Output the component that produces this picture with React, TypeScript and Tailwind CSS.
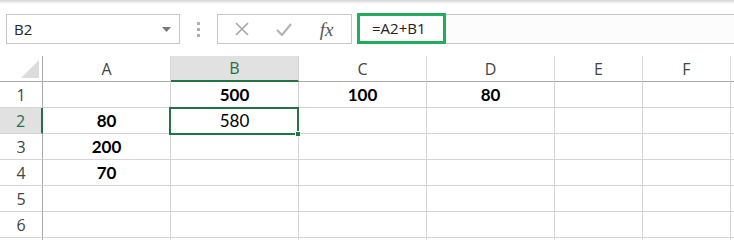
import React from "react";

const cols = ["A", "B", "C", "D", "E", "F", ""];
const data: Record<number, (string | null)[]> = {
  1: [null, "500", "100", "80", null, null, null],
  2: ["80", "580", null, null, null, null, null],
  3: ["200", null, null, null, null, null, null],
  4: ["70", null, null, null, null, null, null],
  5: [null, null, null, null, null, null, null],
  6: [null, null, null, null, null, null, null],
  7: [null, null, null, null, null, null, null],
};

export default function App() {
  return (
    <div className="w-[734px] h-[240px] overflow-hidden bg-white relative" style={{ fontFamily: '"Open Sans", sans-serif' }}>
      <div className="h-[4px] bg-gradient-to-b from-[#d4d4d4] to-white" />
      {/* formula bar */}
      <div className="flex items-stretch h-[31px] mt-[9px]">
        <div className="ml-[6px] w-[174px] border border-[#c6c6c6] bg-white flex items-center justify-between pl-[7px] pr-[8px] mt-[1px] h-[30px]">
          <span className="text-[15px] text-[#222] leading-none">B2</span>
          <svg width="9" height="5" viewBox="0 0 9 5"><path d="M0 0h9L4.5 5z" fill="#777" /></svg>
        </div>
        <div className="w-[37px] flex flex-col items-center justify-center gap-[3px] mt-[1px]">
          <div className="w-[3px] h-[3px] bg-[#b0b0b0]" />
          <div className="w-[3px] h-[3px] bg-[#b0b0b0]" />
          <div className="w-[3px] h-[3px] bg-[#b0b0b0]" />
        </div>
        <div className="w-[135px] h-[30px] mt-[1px] border border-[#c6c6c6] bg-white flex items-center">
          <div className="w-[48px] flex justify-center">
            <svg width="14" height="14" viewBox="0 0 14 14"><path d="M1 1L13 13M13 1L1 13" stroke="#a6a6a6" strokeWidth="1.6" /></svg>
          </div>
          <div className="w-[36px] flex justify-center">
            <svg width="16" height="13" viewBox="0 0 16 13"><path d="M1 7L6 12L15 1" stroke="#b4b4b4" strokeWidth="2.2" fill="none" /></svg>
          </div>
          <div className="flex-1 flex justify-center">
            <span className="italic text-[19px] text-[#555] leading-none" style={{ fontFamily: '"Liberation Serif", serif' }}>fx</span>
          </div>
        </div>
        <div className="ml-[5px] flex-1 flex h-[31px]">
          <div className="w-[89px] border-[3px] border-[#22ad5c] bg-white flex items-center pl-[12px]">
            <span className="text-[15px] text-[#222] leading-none">=A2+B1</span>
          </div>
          <div className="flex-1 border-y border-[#c6c6c6] bg-[#fcfcfc] mt-[1px] h-[30px]" />
        </div>
      </div>
      {/* grid */}
      <div className="mt-[12px] grid grid-cols-[43px_128px_128px_128px_128px_88px_88px_20px] relative">
        {/* header row */}
        <div className="h-[26px] border-r border-b border-[#ababab] relative">
          <svg className="absolute right-[3px] bottom-[3px]" width="18" height="18" viewBox="0 0 18 18"><path d="M18 0V18H0z" fill="#dcdcdc" /></svg>
        </div>
        {cols.map((c, i) => (
          <div
            key={i}
            className={
              c === "B"
                ? "h-[26px] bg-[#e1e1e1] border-r border-[#d4d4d4] border-b-2 border-b-[#217346] flex items-center justify-center text-[16px] text-[#217346]"
                : "h-[26px] border-r border-[#d9d9d9] border-b border-b-[#ababab] flex items-center justify-center text-[16px] text-[#444]"
            }
          >
            {c}
          </div>
        ))}
        {[1, 2, 3, 4, 5, 6, 7].map((r) => (
          <React.Fragment key={r}>
            <div
              className={
                r === 2
                  ? "h-[26px] bg-[#e1e1e1] border-r-2 border-r-[#217346] border-b border-[#d4d4d4] flex items-center justify-center text-[16px] text-[#217346]"
                  : "h-[26px] border-r border-r-[#ababab] border-b border-[#d4d4d4] flex items-center justify-center text-[16px] text-[#444]"
              }
            >
              {r < 7 ? r : ""}
            </div>
            {data[r].map((v, i) => (
              <div
                key={i}
                className={
                  "h-[26px] border-r border-b border-[#d4d4d4] flex items-center justify-center text-[17px] text-black " +
                  (r === 2 && i === 1 ? "font-normal" : "font-bold")
                }
                style={{ fontFamily: 'Lato, "Open Sans", sans-serif' }}
              >
                {v}
              </div>
            ))}
          </React.Fragment>
        ))}
        {/* selection */}
        <div className="absolute left-[169px] top-[51px] w-[130px] h-[28px] border-2 border-[#217346] pointer-events-none">
          <div className="absolute right-[-4px] bottom-[-4px] w-[6px] h-[6px] bg-[#217346] border border-white" />
        </div>
      </div>
    </div>
  );
}
